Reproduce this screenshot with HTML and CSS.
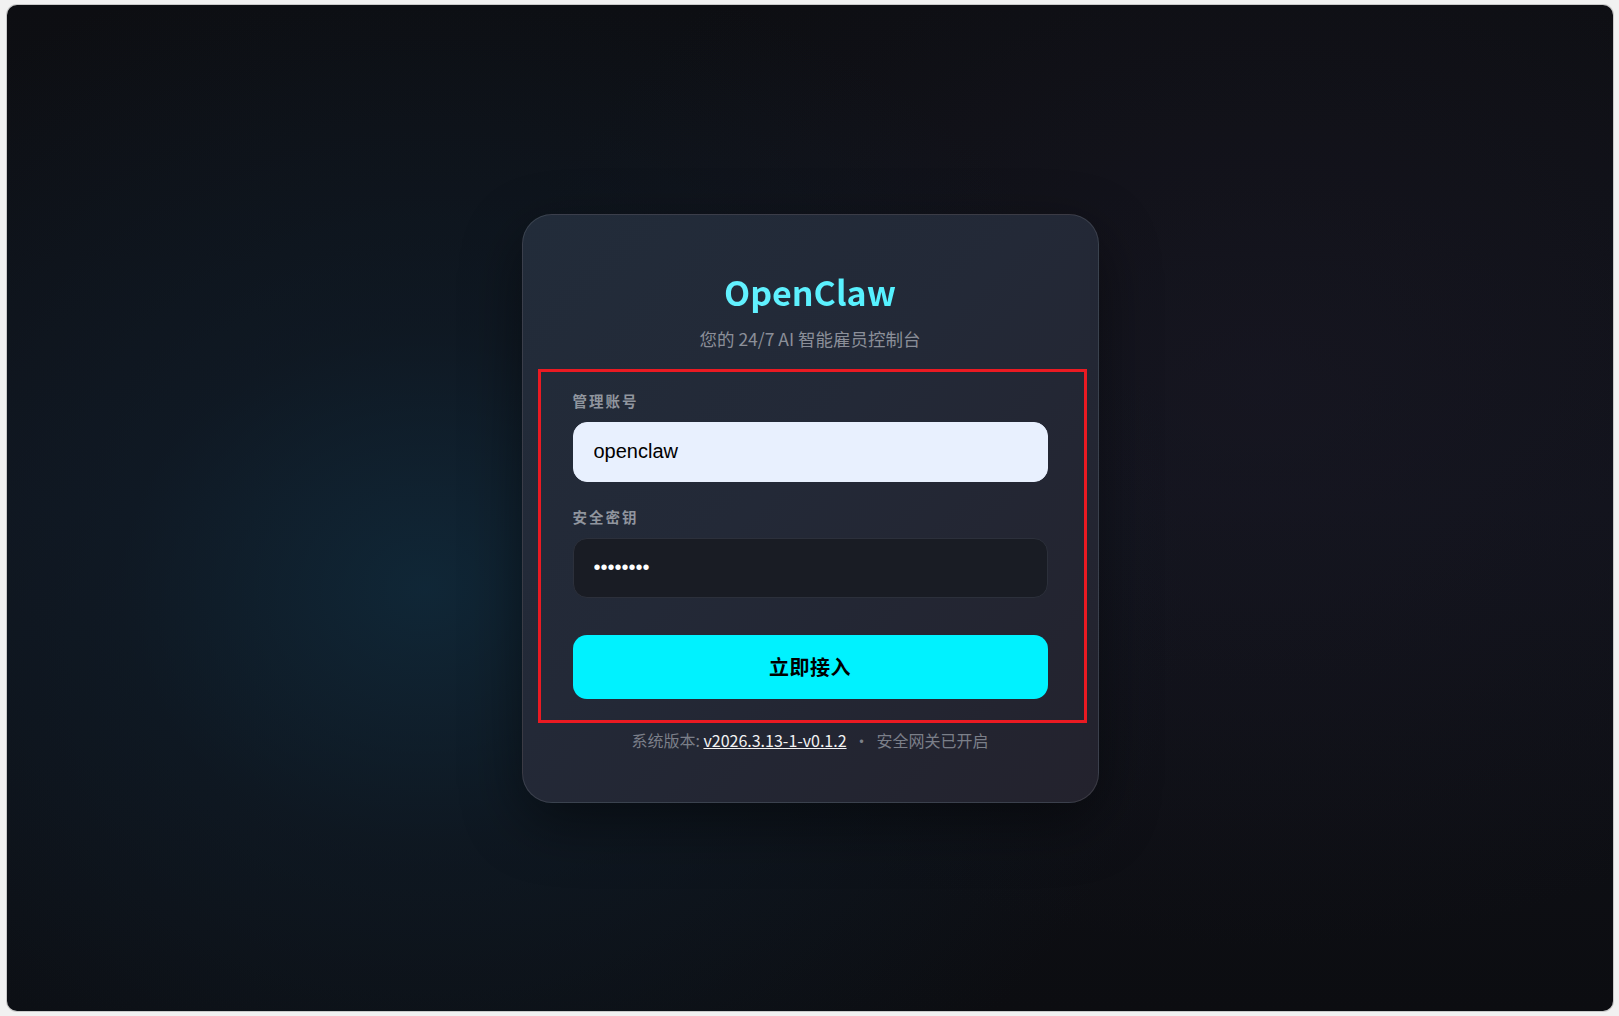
FILE: index.html
```html
<!DOCTYPE html>
<html lang="zh-CN">
<head>
<meta charset="utf-8">
<title>OpenClaw</title>
<link rel="stylesheet" href="styles.css">
</head>
<body>
<div class="window">
  <div class="card">
    <h1 class="title">OpenClaw</h1>
    <p class="subtitle">您的 24/7 AI 智能雇员控制台</p>
    <form class="form">
      <div class="field">
        <label class="label">管理账号</label>
        <input class="input input-filled" type="text" value="openclaw">
      </div>
      <div class="field">
        <label class="label">安全密钥</label>
        <input class="input input-dark" type="password" value="openclaw">
      </div>
      <button class="btn" type="button">立即接入</button>
    </form>
    <p class="footer">系统版本: <a class="ver" href="#">v2026.3.13-1-v0.1.2</a><span class="dot">•</span>安全网关已开启</p>
    <div class="highlight"></div>
  </div>
</div>
</body>
</html>
```
FILE: styles.css
```css
html, body {
  margin: 0;
  padding: 0;
  height: 100%;
}
body {
  background: #f1f1f1;
  font-family: "Noto Sans CJK SC", "Noto Sans", sans-serif;
  padding: 5px 6px 5px 7px;
  box-sizing: border-box;
}
.window {
  height: 100%;
  border-radius: 10px;
  box-shadow: 0 0 0 1px #c9c9c9;
  background:
    radial-gradient(ellipse 760px 640px at 26% 58%, rgba(16, 44, 62, 0.8) 0%, rgba(15, 32, 46, 0.5) 40%, rgba(13, 16, 22, 0) 100%),
    radial-gradient(ellipse 760px 560px at 78% 38%, rgba(28, 26, 40, 0.5) 0%, rgba(20, 20, 28, 0) 100%),
    linear-gradient(180deg, #0d0e12 0%, #10121a 50%, #0c0d11 100%);
  display: flex;
  align-items: center;
  justify-content: center;
}
.card {
  position: relative;
  width: 577px;
  box-sizing: border-box;
  padding: 55px 50px 51px;
  border-radius: 30px;
  border: 1px solid rgba(255, 255, 255, 0.11);
  background: linear-gradient(135deg, #222c3a 0%, #232937 45%, #23222d 100%);
  box-shadow: 0 20px 60px rgba(0, 0, 0, 0.45);
  text-align: center;
}
.title {
  margin: 0;
  font-size: 34px;
  line-height: 44px;
  font-weight: 700;
  background: linear-gradient(90deg, #6ff0fe 0%, #58f1ff 60%, #44f3ff 100%);
  -webkit-background-clip: text;
  background-clip: text;
  color: transparent;
}
.subtitle {
  margin: 13px 0 0;
  font-size: 17.5px;
  line-height: 24px;
  color: #8b8f99;
}
.form {
  margin-top: 40px;
  text-align: left;
  display: flex;
  flex-direction: column;
  gap: 25px;
}
.field {
  display: flex;
  flex-direction: column;
}
.label {
  font-size: 14.5px;
  line-height: 20px;
  letter-spacing: 2px;
  font-weight: 700;
  color: #90959e;
  margin-bottom: 11px;
}
.input {
  height: 60px;
  box-sizing: border-box;
  border-radius: 14px;
  padding: 0 20px;
  font-family: "Liberation Sans", Arial, sans-serif;
  font-size: 20px;
  outline: none;
}
.input-filled {
  background: #e8f0fe;
  border: 1px solid #e8f0fe;
  color: #000;
}
.input-dark {
  background: #191c24;
  border: 1px solid #2c303b;
  color: #fff;
}
.btn {
  margin-top: 12px;
  height: 64px;
  border: none;
  border-radius: 14px;
  background: #00f2ff;
  color: #000;
  font-family: "Noto Sans CJK SC", sans-serif;
  font-size: 20px;
  font-weight: 700;
  letter-spacing: 0.5px;
  cursor: pointer;
}
.footer {
  margin: 30px 0 0;
  font-size: 16px;
  line-height: 22px;
  color: #7b7f89;
}
.ver {
  color: #f2f2f2;
  text-decoration: underline;
}
.dot {
  margin: 0 7px;
  color: #7b7f89;
}
.highlight {
  position: absolute;
  left: 15px;
  top: 154px;
  width: 549px;
  height: 354px;
  box-sizing: border-box;
  border: 3px solid #ea1a22;
  pointer-events: none;
}
```
